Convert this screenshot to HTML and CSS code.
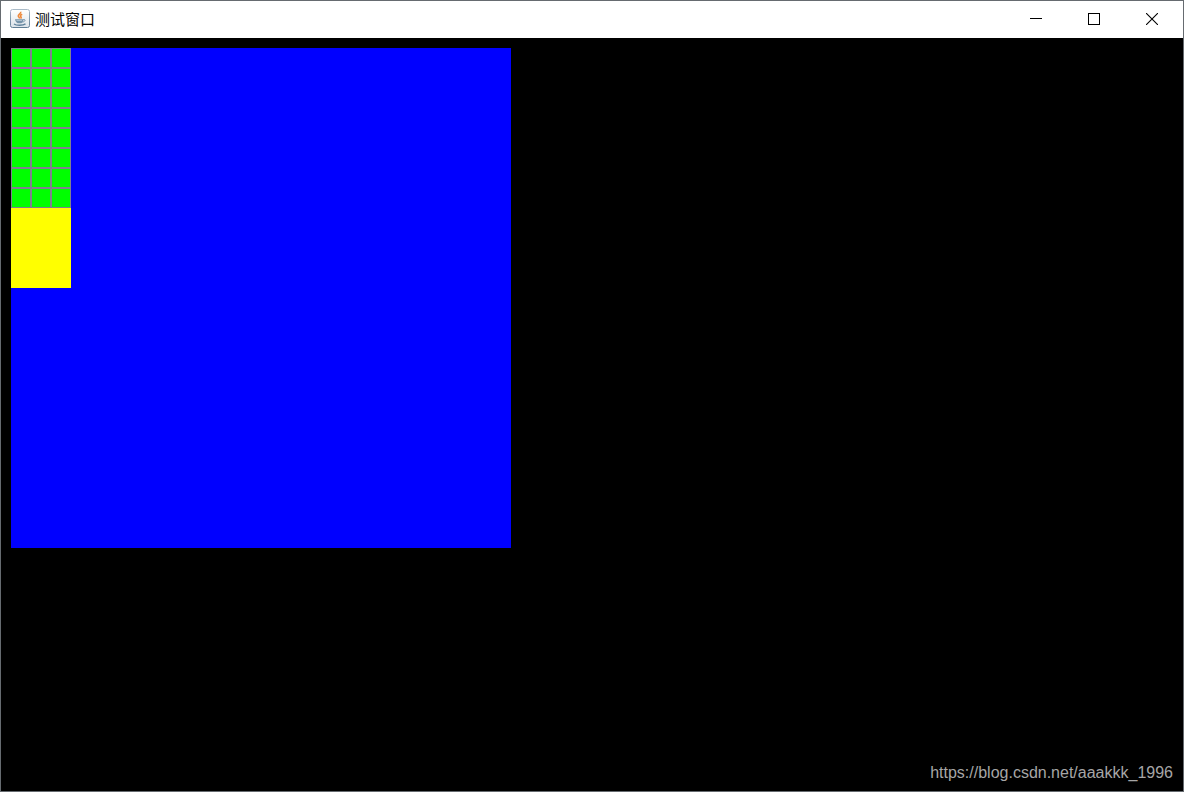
FILE: index.html
```
<!DOCTYPE html>
<html lang="zh-CN">
<head>
	<meta charset="UTF-8">
	<title>测试窗口</title>
	<link rel="stylesheet" href="styles.css">
</head>
<body>

	<div class="window">
		<header class="titlebar">
			<svg class="app-icon" width="20" height="20" viewBox="0 0 20 20">
				<defs>
					<linearGradient id="face" x1="0" y1="0" x2="0" y2="1">
						<stop offset="0" stop-color="#fff"/>
						<stop offset="1" stop-color="#dce3e9"/>
					</linearGradient>
					<linearGradient id="edge" x1="0" y1="0" x2="0" y2="1">
						<stop offset="0" stop-color="#a9bac7"/>
						<stop offset="1" stop-color="#5f7d94"/>
					</linearGradient>
				</defs>
				<rect x="0.5" y="0.5" width="19" height="18" rx="2" fill="url(#face)" stroke="url(#edge)"/>
				<path d="M10.700 2.800c.6 2-3 2.700-2.400 4.500.3.900 1.200 1.200 1.400 2.200M12.200 5.200c-2 .9-2.200 1.700-1.200 2.700.5.600.2 1.100-.3 1.600" fill="none" stroke="#ee8a3c" stroke-width="1.600"/>
				<path d="M5 10.200h8.500c0 2-1 3.500-2.300 4H7.800c-1.300-.5-2.500-2-2.800-4z" fill="#7694aa"/>
				<path d="M6.500 11.500h5.500" stroke="#c3d1dc" stroke-width=".7"/>
				<path d="M13.300 10.500c2.500-.5 2.400 2-.8 2.600" fill="none" stroke="#7694aa"/>
				<path d="M4 14.900c2.200 1.800 9 1.800 11.500 0" fill="none" stroke="#5f819b" stroke-width="1.300"/>
			</svg>
			<h1 class="title">测试窗口</h1>
			<div class="controls">
				<button type="button" aria-label="最小化">
					<svg width="12" height="12" shape-rendering="crispEdges"><path d="M0 5.500h12" stroke="#000"/></svg>
				</button>
				<button type="button" aria-label="最大化">
					<svg width="12" height="12" shape-rendering="crispEdges"><path d="M.5.5h11v11H.5z" fill="none" stroke="#000"/></svg>
				</button>
				<button type="button" aria-label="关闭">
					<svg width="12" height="12"><path d="M0 0l12 12M12 0L0 12" stroke="#000" stroke-width="1.100"/></svg>
				</button>
			</div>
		</header>

		<main class="content">
			<div class="board">
				<div class="panel">
					<div class="cells"></div>
				</div>
			</div>
			<a class="watermark" href="https://blog.csdn.net/aaakkk_1996">https://blog.csdn.net/aaakkk_1996</a>
		</main>
	</div>

	<script>
		'use strict';

	// 8 rows of 3 cells
	let cells = document.querySelector('.cells');
	for (let i = 0; i < 24; i++) {
		let cell = document.createElement('div');
		cell.className = 'cell';
		cells.append(cell);
	}
	</script>
</body>
</html>
```

FILE: styles.css
```
* {
	box-sizing: border-box;
}

body {
	margin: 0;
	background: #000;
}

.window {
	display: flex;
	flex-direction: column;
	min-height: 100vh;
	border: 1px solid #666b70;
}

.titlebar {
	display: flex;
	align-items: center;
	height: 37px;
	padding: 0 2px 2px 9px;
	background: #fff;
}

.title {
	margin: 0 0 0 5px;
	font: 15px/20px "Noto Sans CJK SC", sans-serif;
	color: #000;
}

.controls {
	display: flex;
	align-self: stretch;
	margin-left: auto;
}

.controls button {
	display: flex;
	align-items: center;
	justify-content: center;
	width: 58px;
	padding: 0;
	border: 0;
	background: none;
}

.content {
	display: flex;
	flex: 1;
	flex-direction: column;
	padding: 10px;
	padding-bottom: 8px;
	background: #000;
}

.board {
	width: 500px;
	height: 500px;
	background: #00f;
}

.panel {
	width: 60px;
	height: 240px;
	background: #ff0;
}

.cells {
	display: grid;
	grid-template-columns: repeat(3, 20px);
}

.cell {
	height: 20px;
	border: 1px solid #808090;
	background: #0f0;
}

.watermark {
	margin-top: auto;
	align-self: flex-end;
	font: 16px/20px "Liberation Sans", Arial, sans-serif;
	color: #a6a6a6;
	text-decoration: none;
}
```
